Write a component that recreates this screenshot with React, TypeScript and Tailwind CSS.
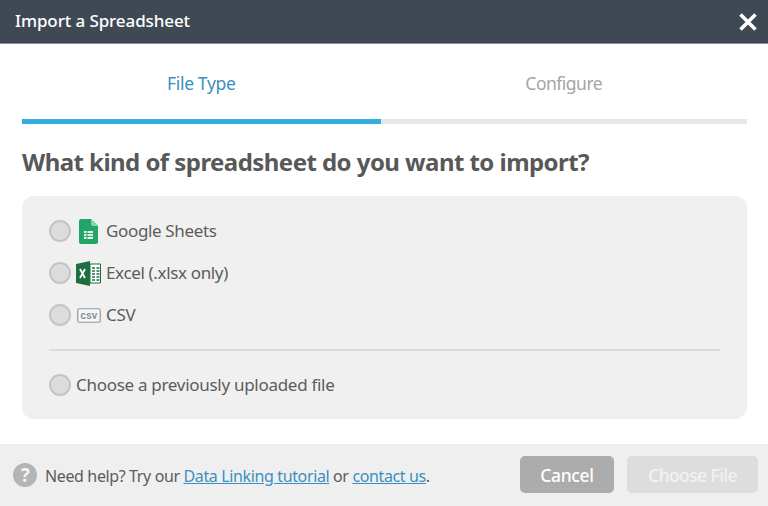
import React from "react";

function Radio() {
  return <span className="block w-[22px] h-[22px] rounded-full bg-[#dcdcdc] border-2 border-[#c4c4c4] shrink-0" />;
}

function SheetsIcon() {
  return (
    <svg width="19" height="25" viewBox="0 0 19 25" className="block">
      <path d="M2 0H12L19 7V23a2 2 0 0 1-2 2H2a2 2 0 0 1-2-2V2a2 2 0 0 1 2-2z" fill="#23a566" />
      <path d="M12 0L19 7H14a2 2 0 0 1-2-2z" fill="#8ed1b1" />
      <path d="M5 12h9v8H5z" fill="#e8f5ee" />
      <path d="M5 14.5h9M5 17.3h9M8 12v8" stroke="#23a566" strokeWidth="1" />
    </svg>
  );
}

function ExcelIcon() {
  return (
    <svg width="25" height="25" viewBox="0 0 25 25" className="block">
      <path d="M14 3h10.5v19H14z" fill="#fff" stroke="#1d6f42" strokeWidth="1" />
      <path d="M16 7h3M20.5 7h3M16 10h3M20.5 10h3M16 13h3M20.5 13h3M16 16h3M20.5 16h3M16 19h3M20.5 19h3" stroke="#1d6f42" strokeWidth="1.6" />
      <path d="M0 3L14 0V25L0 22z" fill="#1d6f42" />
      <path d="M4 8l5 9M9 8l-5 9" stroke="#fff" strokeWidth="1.8" />
    </svg>
  );
}

function CsvIcon() {
  return (
    <svg width="24" height="15" viewBox="0 0 24 15" className="block">
      <rect x="0.75" y="0.75" width="22.5" height="13.5" rx="1.5" fill="#f4f5f6" stroke="#8f99a3" strokeWidth="1.2" />
      <text x="12" y="10.8" textAnchor="middle" fontSize="9" fontWeight="700" letterSpacing="0.3" fill="#7d8893" fontFamily="'Liberation Mono', monospace">CSV</text>
    </svg>
  );
}

function Option({ icon, label }: { icon: React.ReactNode; label: string }) {
  return (
    <div className="flex items-center h-[42px]">
      <Radio />
      <span className="w-[35px] flex justify-center shrink-0">{icon}</span>
      <span className="text-[17px] text-[#5c5c5c]">{label}</span>
    </div>
  );
}

export default function App() {
  return (
    <div className="w-[768px] h-[506px] bg-white flex flex-col overflow-hidden tracking-[-0.35px]" style={{ fontFamily: "'Noto Sans', 'Liberation Sans', sans-serif" }}>
      <header className="h-[44px] shrink-0 bg-[#3f4954] border-b border-[#8b9198] flex items-center justify-between pl-[15px] pr-[10px]">
        <span className="text-white text-[17px] font-medium tracking-[-0.1px] mb-[2px]">Import a Spreadsheet</span>
        <svg width="20" height="20" viewBox="0 0 20 20" className="block">
          <path d="M2.5 2.5L17.5 17.5M17.5 2.5L2.5 17.5" stroke="#fff" strokeWidth="3.6" />
        </svg>
      </header>

      <main className="flex-1 pl-[22px] pr-[21px] flex flex-col">
        <div className="grid grid-cols-2 h-[75px]">
          <div className="flex items-center justify-center pt-[3px] pr-[4px] text-[17.5px] text-[#3a8fc0]">File Type</div>
          <div className="flex items-center justify-center pt-[3px] pr-[4px] text-[17.5px] tracking-[-0.5px] text-[#a5a5a5]">Configure</div>
        </div>
        <div className="h-[5px] bg-[#e6e6e6]">
          <div className="h-full w-[359px] bg-[#35abe0]" />
        </div>
        <h1 className="mt-[21px] text-[24px] leading-[34px] font-bold text-[#585858] tracking-[-0.55px]">What kind of spreadsheet do you want to import?</h1>
        <section className="mt-[17px] h-[223px] bg-[#f0f0f0] rounded-[12px] px-[27px] pt-[14px]">
          <Option icon={<SheetsIcon />} label="Google Sheets" />
          <Option icon={<ExcelIcon />} label="Excel (.xlsx only)" />
          <Option icon={<CsvIcon />} label="CSV" />
          <div className="mt-[13px] mb-[13px] h-[2px] bg-[#dcdcdc]" />
          <div className="flex items-center h-[42px] gap-[5px]">
            <Radio />
            <span className="text-[17px] tracking-[-0.29px] text-[#5c5c5c]">Choose a previously uploaded file</span>
          </div>
        </section>
      </main>

      <footer className="h-[62px] shrink-0 bg-[#efefef] flex items-center justify-between pl-[13px] pr-[10px]">
        <div className="flex items-center gap-[8px] text-[16px] tracking-[-0.37px] text-[#5c5c5c]">
          <span className="w-[24px] h-[24px] rounded-full bg-[#b4b4b4] text-[#f4f4f4] flex items-center justify-center font-bold text-[19px]">?</span>
          <span className="pt-[2px]">
            Need help? Try our <a className="text-[#3a8fc0] underline">Data Linking tutorial</a> or <a className="text-[#3a8fc0] underline">contact us</a>.
          </span>
        </div>
        <div className="flex items-center gap-[13px] mb-[1px]">
          <button className="w-[94px] h-[37px] rounded-[5px] bg-[#acacac] text-white text-[17.5px] font-medium pt-[2px]">Cancel</button>
          <button className="w-[131px] h-[37px] rounded-[5px] bg-[#dddddd] text-[#f2f2f2] text-[17.5px] font-medium tracking-[-0.6px] pt-[2px]">Choose File</button>
        </div>
      </footer>
    </div>
  );
}
